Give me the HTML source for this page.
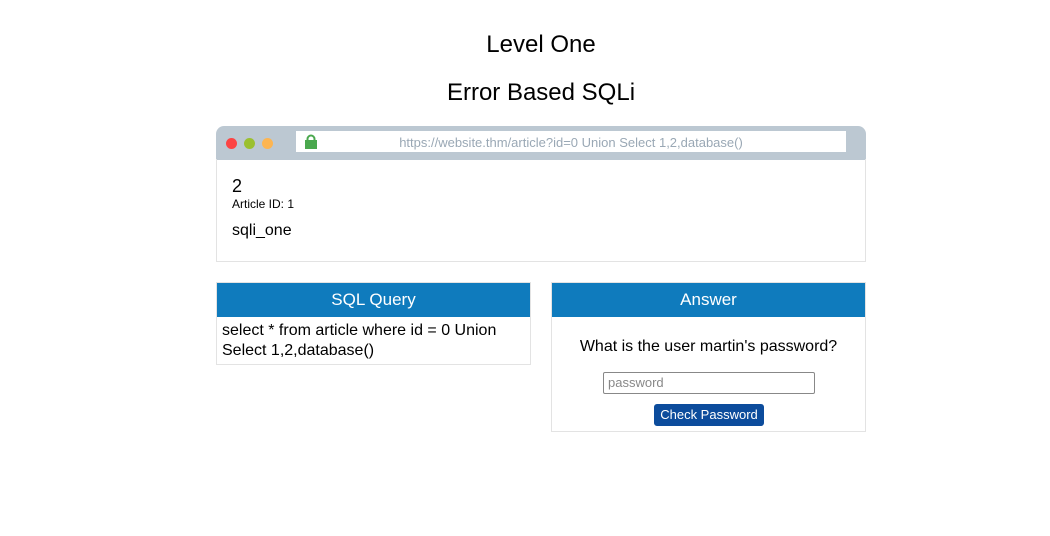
<!DOCTYPE html>
<html><head><style>
*{margin:0;padding:0;box-sizing:border-box}
body{width:1050px;height:536px;background:#fff;font-family:"Liberation Sans","DejaVu Sans",sans-serif;color:#000;position:relative;overflow:hidden}
.a{position:absolute}
h1{position:absolute;left:16px;width:1050px;text-align:center;font-size:24px;font-weight:normal}
.bar{left:216px;top:126px;width:650px;height:34px;background:#bcc8d2;border-radius:8px 8px 0 0}
.dot{width:11px;height:11px;border-radius:50%;top:138px}
.url{left:296px;top:131px;width:550px;height:21px;background:#fff;font-size:13px;color:#9aa8b5;text-align:center;line-height:23px}
.content{left:216px;top:159px;width:650px;height:103px;border:1px solid #e3e3e3;border-top:none}
.panel{border:1px solid #e3e3e3}
.hd{background:#0f7bbd;color:#fff;text-align:center;font-size:17px;height:34px;line-height:33px}
</style></head><body>
<h1 style="top:31px">Level One</h1>
<h1 style="top:79px">Error Based SQLi</h1>
<div class="a bar"></div>
<div class="a dot" style="left:226px;background:#fc4444"></div>
<div class="a dot" style="left:244px;background:#9bc02f"></div>
<div class="a dot" style="left:262px;background:#fdb551"></div>
<div class="a url">https://website.thm/article?id=0 Union Select 1,2,database()</div>
<svg class="a" style="left:304px;top:134px" width="14" height="16" viewBox="0 0 14 16"><path d="M3.5 7V5a3.5 3.5 0 0 1 7 0v2" fill="none" stroke="#4aa84e" stroke-width="2"/><rect x="1" y="6" width="12" height="9" fill="#4aa84e"/></svg>
<div class="a content"></div>
<div class="a" style="left:232px;top:176px;font-size:18px">2</div>
<div class="a" style="left:232px;top:197px;font-size:12px">Article ID: 1</div>
<div class="a" style="left:232px;top:222px;font-size:16px">sqli_one</div>
<div class="a panel" style="left:216px;top:282px;width:315px;height:83px">
<div class="hd">SQL Query</div>
<div style="padding:4px 5px;font-size:16px;line-height:20px">select * from article where id = 0 Union Select 1,2,database()</div>
</div>
<div class="a panel" style="left:551px;top:282px;width:315px;height:150px">
<div class="hd">Answer</div>
<div style="text-align:center;font-size:16px;margin-top:21px">What is the user martin's password?</div>
<div style="position:absolute;left:51px;top:89px;width:212px;height:22px;border:1px solid #888;border-radius:2px;font-size:13px;color:#888;padding-left:4px;line-height:20px">password</div>
<div style="position:absolute;left:102px;top:121px;width:110px;height:22px;background:#0c4c9c;border-radius:3px;color:#fff;font-size:13px;text-align:center;line-height:22px">Check Password</div>
</div>
</body></html>
